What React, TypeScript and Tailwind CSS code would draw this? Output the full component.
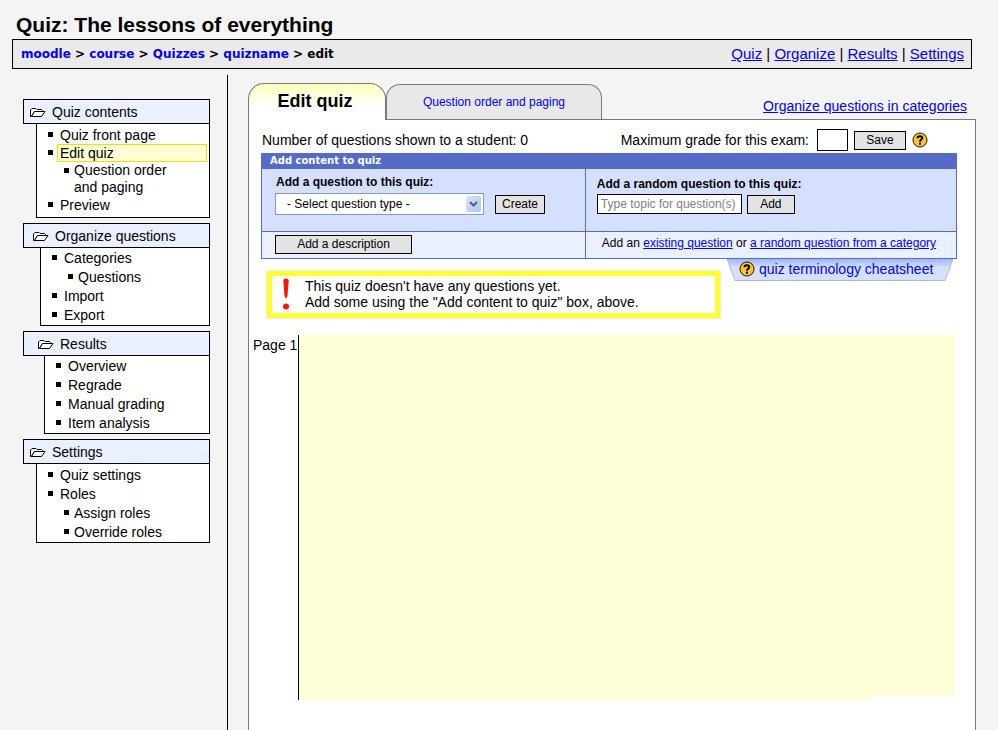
import { ReactNode } from "react";

type Item = {
  label: ReactNode;
  nested?: boolean;
  current?: boolean;
};

type Block = {
  title: string;
  headClass: string;
  listClass: string;
  items: Item[];
};

const blocks: Block[] = [
  {
    title: "Quiz contents",
    headClass: "pl-[6px]",
    listClass: "ml-[13px] pt-[2px] pb-[3px] leading-[18px]",
    items: [
      { label: "Quiz front page" },
      { label: "Edit quiz", current: true },
      {
        label: (
          <span className="block leading-[17px]">
            Question order
            <br />
            and paging
          </span>
        ),
        nested: true,
      },
      { label: "Preview" },
    ],
  },
  {
    title: "Organize questions",
    headClass: "pl-[9px]",
    listClass: "ml-[17px] pt-px leading-[19px]",
    items: [
      { label: "Categories" },
      { label: "Questions", nested: true },
      { label: "Import" },
      { label: "Export" },
    ],
  },
  {
    title: "Results",
    headClass: "pl-[14px]",
    listClass: "ml-[21px] pt-px leading-[19px]",
    items: [
      { label: "Overview" },
      { label: "Regrade" },
      { label: "Manual grading" },
      { label: "Item analysis" },
    ],
  },
  {
    title: "Settings",
    headClass: "pl-[6px]",
    listClass: "ml-[13px] pt-[2px] leading-[19px]",
    items: [
      { label: "Quiz settings" },
      { label: "Roles" },
      { label: "Assign roles", nested: true },
      { label: "Override roles", nested: true },
    ],
  },
];

const crumbs = ["moodle", "course", "Quizzes", "quizname"];
const sections = ["Quiz", "Organize", "Results", "Settings"];

function FolderIcon() {
  return (
    <svg width="16" height="10" viewBox="0 0 16 10" fill="#fff" stroke="#000" aria-hidden="true">
      <path d="M.5 8.500V2L2 .500H6L7 1.500H11.500L12.500 2.500V3.500H4.500L1.500 8.500Z" />
      <path d="M1.500 8.500L4.500 3.500H15L11.500 8.500Z" />
    </svg>
  );
}

function HelpIcon() {
  return (
    <svg width="16" height="16" viewBox="0 0 16 16" aria-hidden="true">
      <circle cx="8" cy="8" r="7" fill="#fdc62f" stroke="#1c1608" />
      <path
        d="M5.500 6.300C5.500 3.500 10.300 3.500 10.300 6C10.300 7.600 8 7.600 8 9.700"
        fill="none"
        stroke="#000"
        strokeWidth="2"
      />
      <rect x="7" y="10.700" width="2" height="2" />
    </svg>
  );
}

function SideBlock({ block }: { block: Block }) {
  return (
    <section>
      <h2
        className={`flex h-[25px] items-center gap-[6px] border border-black bg-[#eaf0ff] pt-[2px] ${block.headClass}`}
      >
        <FolderIcon />
        {block.title}
      </h2>
      <ul className={`border-x border-b border-black bg-white ${block.listClass}`}>
        {block.items.map((item, i) => (
          <li
            key={i}
            className={`flex items-start pr-[2px] ${item.nested ? "pl-[27px]" : "pl-[11px]"}`}
          >
            <span
              className={`mt-[6px] h-[5px] w-[5px] shrink-0 bg-black ${item.nested ? "mr-[5px]" : "mr-[4px]"}`}
            />
            <a
              href="#"
              className={
                item.current
                  ? "flex-1 border border-[#ffdc00] bg-[#ffffd5] pl-[2px] leading-[16px]"
                  : item.nested
                    ? ""
                    : "pl-[3px]"
              }
            >
              {item.label}
            </a>
          </li>
        ))}
      </ul>
    </section>
  );
}

function Header() {
  return (
    <header className="pt-[11px] pr-[26px] pl-3">
      <h1 className="pl-1 text-[21px] leading-[28px] font-bold">
        Quiz: The lessons of everything
      </h1>
      <div className="flex h-[30px] items-center justify-between border border-black bg-[#eaeaea] pr-[7px] pl-2">
        <nav
          aria-label="Breadcrumb"
          className="font-['DejaVu_Sans',sans-serif] text-[12px] font-bold"
        >
          {crumbs.map((crumb) => (
            <span key={crumb}>
              <a href="#" className="text-[#0000f5]">
                {crumb}
              </a>
              {" > "}
            </span>
          ))}
          edit
        </nav>
        <nav aria-label="Sections" className="text-[15px]">
          {sections.map((section, i) => (
            <span key={section}>
              {i > 0 && " | "}
              <a href="#" className="text-[#0000f5] underline">
                {section}
              </a>
            </span>
          ))}
        </nav>
      </div>
    </header>
  );
}

function Tabs() {
  return (
    <div className="flex items-end">
      <a
        href="#"
        className="z-10 -mb-px flex h-[37px] w-[138px] items-center justify-center rounded-t-[16px] border border-b-0 border-[#777a85] bg-linear-to-b from-[#ffffb8] to-white to-60% pr-1 pb-[2px] text-[18px] font-bold"
      >
        Edit quiz
      </a>
      <a
        href="#"
        className="flex h-[35px] w-[216px] items-center justify-center rounded-t-[14px] border border-b-0 border-[#777a85] bg-[#e8e8e8] text-[12px] text-[#0000f5]"
      >
        Question order and paging
      </a>
      <a
        href="#"
        className="mr-[9px] mb-1 ml-auto text-[14px] leading-[18px] text-[#0000f5] underline"
      >
        Organize questions in categories
      </a>
    </div>
  );
}

const button = "h-[19px] border border-black bg-[#e3e3e3] text-[12px] leading-[17px]";

function AddContent() {
  return (
    <section className="border border-[#556bc8]">
      <h2 className="h-[15px] bg-[#556bc8] pl-2 font-['DejaVu_Sans',sans-serif] text-[10px] leading-[14px] font-bold text-white">
        Add content to quiz
      </h2>
      <div className="grid grid-cols-[7fr_8fr] text-[12px]">
        <div className="h-[63px] border-r border-b border-[#556bc8] bg-[#d5e0ff] pt-[5px] pl-[13px]">
          <label htmlFor="qtype" className="block pl-px leading-[16px] font-bold">
            Add a question to this quiz:
          </label>
          <div className="mt-[3px] flex items-center gap-[11px]">
            <div className="relative">
              <select
                id="qtype"
                className="h-[22px] w-[209px] appearance-none border border-[#7f9db9] bg-white pl-[11px] text-[12px]"
              >
                <option>- Select question type -</option>
              </select>
              <span className="pointer-events-none absolute top-[3px] right-[3px] flex h-4 w-[15px] items-center justify-center rounded-[2px] bg-linear-to-br from-[#dbe5ff] to-[#afc5f7]">
                <svg width="9" height="6" viewBox="0 0 9 6" aria-hidden="true">
                  <path d="M1 1L4.500 4.500L8 1" fill="none" stroke="#4d6185" strokeWidth="2" />
                </svg>
              </span>
            </div>
            <button type="button" className={`w-[50px] ${button}`}>
              Create
            </button>
          </div>
        </div>
        <div className="border-b border-[#556bc8] bg-[#d5e0ff] pt-[7px] pl-[11px]">
          <label htmlFor="topic" className="block leading-[16px] font-bold">
            Add a random question to this quiz:
          </label>
          <div className="mt-[2px] flex items-center gap-[5px]">
            <input
              id="topic"
              type="text"
              placeholder="Type topic for question(s)"
              className="h-5 w-[145px] border border-black bg-white pl-[3px] text-[12px] placeholder:text-[#808080]"
            />
            <button type="button" className={`w-12 ${button}`}>
              Add
            </button>
          </div>
        </div>
        <div className="h-[26px] border-r border-[#556bc8] bg-[#eaf0ff] pt-[3px] pl-[13px]">
          <button type="button" className={`block w-[137px] ${button}`}>
            Add a description
          </button>
        </div>
        <div className="bg-[#eaf0ff] pl-4 leading-[22px]">
          Add an{" "}
          <a href="#" className="text-[#0000f5] underline">
            existing question
          </a>{" "}
          or{" "}
          <a href="#" className="text-[#0000f5] underline">
            a random question from a category
          </a>
        </div>
      </div>
    </section>
  );
}

function Cheatsheet() {
  return (
    <a
      href="#"
      className="relative mr-1 flex h-[22px] w-[226px] items-center gap-1 pb-[2px] pl-3 text-[14px] text-[#0000f5]"
    >
      <svg
        className="absolute inset-0 h-full w-full"
        viewBox="0 0 226 22"
        preserveAspectRatio="none"
        aria-hidden="true"
      >
        <defs>
          <linearGradient id="sheet" x1="0" y1="0" x2="0" y2="1">
            <stop offset="0" stopColor="#9db5f8" />
            <stop offset="0.4" stopColor="#d5e0ff" />
          </linearGradient>
        </defs>
        <path d="M0 0L8 21.500H218L226 0" fill="url(#sheet)" stroke="#b4b8c4" />
      </svg>
      <span className="relative flex">
        <HelpIcon />
      </span>
      <span className="relative">quiz terminology cheatsheet</span>
    </a>
  );
}

function Notice() {
  return (
    <div
      role="alert"
      className="mt-3 ml-[6px] flex h-[47px] w-[453px] items-center border-[5px] border-[#ffff32] bg-white pb-px pl-[10px] text-[14px] leading-[16px] outline outline-[#fde8d8]"
    >
      <svg width="8" height="32" viewBox="0 0 8 32" fill="#ff1408" aria-hidden="true">
        <path d="M1.300 2.500Q1.500.500 4 .500Q6.500.500 6.700 2.500L5.500 18Q5.200 20 4 20Q2.800 20 2.500 18Z" />
        <circle cx="4" cy="28.500" r="3" />
      </svg>
      <p className="pl-[15px]">
        This quiz doesn't have any questions yet.
        <br />
        Add some using the "Add content to quiz" box, above.
      </p>
    </div>
  );
}

function App() {
  return (
    <div className="flex min-h-screen flex-col bg-[#f4f4f4] font-['Liberation_Sans',Arial,sans-serif] text-[14px] text-black">
      <Header />
      <div className="mt-[6px] flex flex-1">
        <aside className="flex w-[228px] shrink-0 flex-col gap-[5px] border-r border-black pt-6 pr-[17px] pl-[23px]">
          {blocks.map((block) => (
            <SideBlock key={block.title} block={block} />
          ))}
        </aside>
        <main className="mr-[22px] ml-5 flex flex-1 flex-col pt-2">
          <Tabs />
          <div className="flex-1 border border-b-0 border-[#777a85] bg-white">
            <div className="pr-[18px] pl-3">
              <div className="flex h-[33px] items-center justify-between pt-[7px] pr-[29px]">
                <p className="pl-px">Number of questions shown to a student: 0</p>
                <form className="flex items-center gap-[6px]">
                  <label htmlFor="grade" className="pr-[2px]">
                    Maximum grade for this exam:
                  </label>
                  <input
                    id="grade"
                    type="text"
                    className="h-[22px] w-[31px] border border-black bg-white text-center"
                  />
                  <button type="button" className={`w-[52px] ${button}`}>
                    Save
                  </button>
                  <HelpIcon />
                </form>
              </div>
              <AddContent />
              <div className="flex items-start justify-between">
                <Notice />
                <Cheatsheet />
              </div>
            </div>
            <div className="mt-[17px] flex pr-[21px] pl-1">
              <h2 className="w-[45px] shrink-0">Page 1</h2>
              <div className="flex-1 border-l border-black">
                <div className="h-[361px] bg-[#ffffd7]" />
                <div className="mr-[83px] h-1 bg-[#ffffd7]" />
              </div>
            </div>
          </div>
        </main>
      </div>
    </div>
  );
}

export default App;
